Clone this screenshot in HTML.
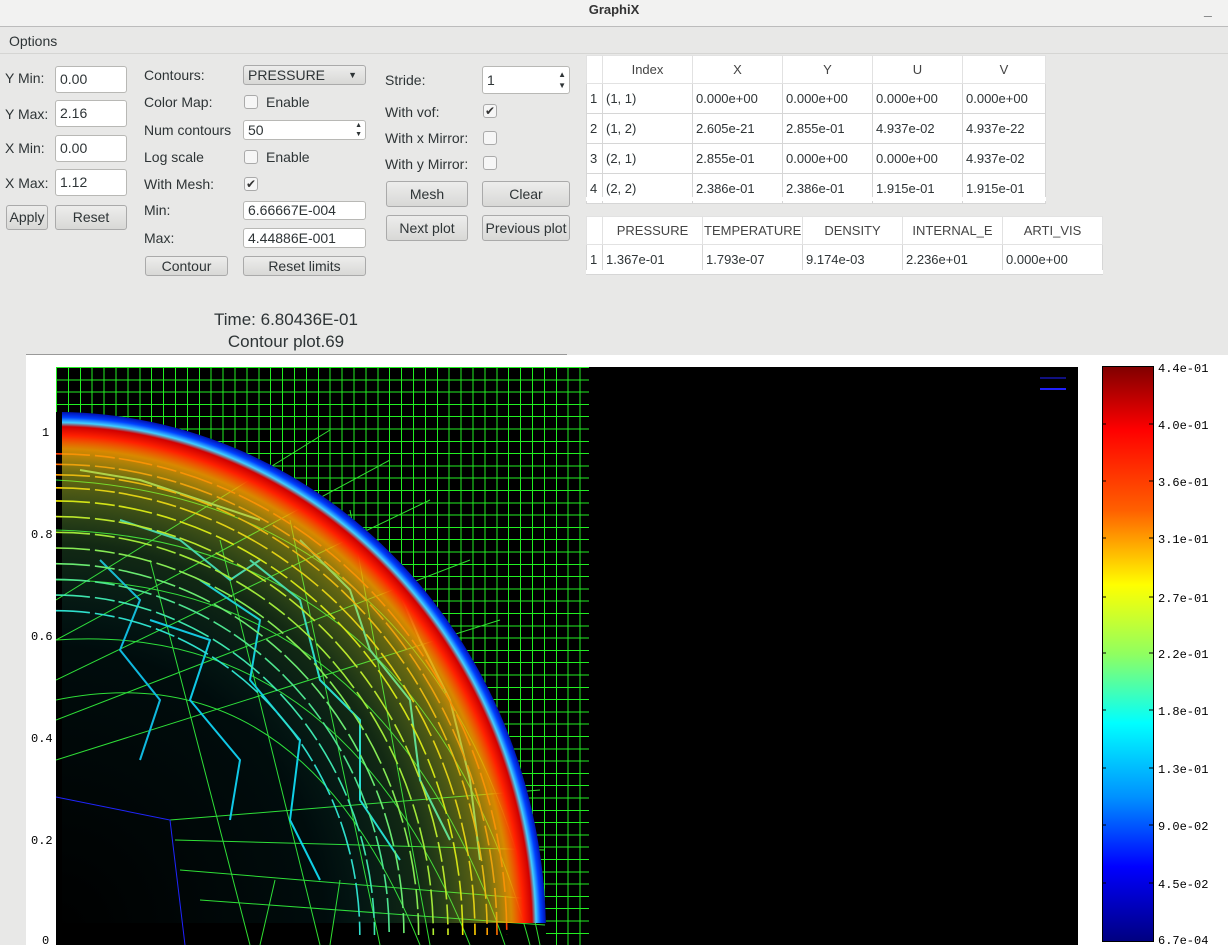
<!DOCTYPE html>
<html><head><meta charset="utf-8"><style>
body{margin:0;width:1228px;height:945px;overflow:hidden;background:#e8e8e7;font-family:"Liberation Sans",sans-serif;font-size:14px;color:#2e3436;position:relative}
.a{position:absolute;white-space:nowrap}
.inp{position:absolute;background:#fff;border:1px solid #b8b8b5;border-radius:3px;box-sizing:border-box;padding-left:4px;font-size:14px;line-height:24px;white-space:nowrap;overflow:hidden}
.btn{position:absolute;background:linear-gradient(#ededec,#d8d8d6);border:1px solid #aaa;border-radius:3px;box-sizing:border-box;text-align:center;font-size:14px;white-space:nowrap;overflow:hidden}
.cb{position:absolute;width:14px;height:14px;border:1px solid #aaa;border-radius:3px;background:#f6f6f6;box-sizing:border-box;font-size:12px;line-height:12px;text-align:center;color:#333}
table{position:absolute;border-collapse:collapse;background:#fff;font-size:13px;table-layout:fixed}
td{border:1px solid #d6d6d6;padding:0 3px;height:29px;white-space:nowrap;overflow:hidden}
th{font-weight:normal;border:1px solid #e2e2e2;height:25px;color:#444;white-space:nowrap;overflow:hidden}
</style></head><body>
<div class="a" style="left:0;top:0;width:1228px;height:26px;background:#f2f2f1;border-bottom:1px solid #bcbcbc"></div>
<div class="a" style="left:0;width:1228px;top:2px;text-align:center;font-weight:bold;font-size:13px;color:#333">GraphiX</div>
<div class="a" style="left:1204px;top:2px;font-weight:bold">_</div>
<div class="a" style="left:9px;top:33px">Options</div>
<div class="a" style="left:0;top:53px;width:1228px;height:1px;background:#d5d5d3"></div>

<div class="a" style="left:5px;top:70px">Y Min:</div><div class="inp" style="left:55px;top:66px;width:72px;height:27px">0.00</div>
<div class="a" style="left:5px;top:106px">Y Max:</div><div class="inp" style="left:55px;top:100px;width:72px;height:27px">2.16</div>
<div class="a" style="left:5px;top:140px">X Min:</div><div class="inp" style="left:55px;top:135px;width:72px;height:27px">0.00</div>
<div class="a" style="left:5px;top:175px">X Max:</div><div class="inp" style="left:55px;top:169px;width:72px;height:27px">1.12</div>
<div class="btn" style="left:6px;top:205px;width:42px;height:25px;line-height:23px">Apply</div>
<div class="btn" style="left:55px;top:205px;width:72px;height:25px;line-height:23px">Reset</div>

<div class="a" style="left:144px;top:67px">Contours:</div>
<div class="btn" style="left:243px;top:65px;width:123px;height:20px;line-height:18px;text-align:left;padding-left:4px">PRESSURE<span style="position:absolute;right:8px;font-size:9px">▼</span></div>
<div class="a" style="left:144px;top:94px">Color Map:</div><div class="cb" style="left:244px;top:95px"></div><div class="a" style="left:266px;top:94px">Enable</div>
<div class="a" style="left:144px;top:122px">Num contours</div><div class="inp" style="left:243px;top:120px;width:123px;height:20px;line-height:18px">50<span style="position:absolute;right:3px;top:0;font-size:7px;line-height:9px">▲<br>▼</span></div>
<div class="a" style="left:144px;top:149px">Log scale</div><div class="cb" style="left:244px;top:150px"></div><div class="a" style="left:266px;top:149px">Enable</div>
<div class="a" style="left:144px;top:176px">With Mesh:</div><div class="cb" style="left:244px;top:177px">✔</div>
<div class="a" style="left:144px;top:202px">Min:</div><div class="inp" style="left:243px;top:201px;width:123px;height:19px;line-height:17px">6.66667E-004</div>
<div class="a" style="left:144px;top:230px">Max:</div><div class="inp" style="left:243px;top:228px;width:123px;height:20px;line-height:18px">4.44886E-001</div>
<div class="btn" style="left:145px;top:256px;width:83px;height:20px;line-height:18px">Contour</div>
<div class="btn" style="left:243px;top:256px;width:123px;height:20px;line-height:18px">Reset limits</div>

<div class="a" style="left:385px;top:72px">Stride:</div><div class="inp" style="left:482px;top:66px;width:88px;height:28px;line-height:26px">1<span style="position:absolute;right:3px;top:2px;font-size:8px;line-height:11px">▲<br>▼</span></div>
<div class="a" style="left:385px;top:104px">With vof:</div><div class="cb" style="left:483px;top:104px">✔</div>
<div class="a" style="left:385px;top:130px">With x Mirror:</div><div class="cb" style="left:483px;top:131px"></div>
<div class="a" style="left:385px;top:156px">With y Mirror:</div><div class="cb" style="left:483px;top:156px"></div>
<div class="btn" style="left:386px;top:181px;width:82px;height:26px;line-height:24px">Mesh</div>
<div class="btn" style="left:482px;top:181px;width:88px;height:26px;line-height:24px">Clear</div>
<div class="btn" style="left:386px;top:215px;width:82px;height:26px;line-height:24px">Next plot</div>
<div class="btn" style="left:482px;top:215px;width:88px;height:26px;line-height:24px">Previous plot</div>

<div class="a" style="left:186px;width:200px;text-align:center;top:310px;font-size:17px">Time: 6.80436E-01</div>
<div class="a" style="left:186px;width:200px;text-align:center;top:332px;font-size:17px">Contour plot.69</div>
<div class="a" style="left:26px;top:354px;width:541px;height:1px;background:#999"></div>

<table style="left:586px;top:55px;width:460px">
<colgroup><col style="width:16px"><col style="width:90px"><col style="width:90px"><col style="width:90px"><col style="width:90px"><col></colgroup>
<tr><th></th><th>Index</th><th>X</th><th>Y</th><th>U</th><th>V</th></tr>
<tr><td>1</td><td>(1, 1)</td><td>0.000e+00</td><td>0.000e+00</td><td>0.000e+00</td><td>0.000e+00</td></tr>
<tr><td>2</td><td>(1, 2)</td><td>2.605e-21</td><td>2.855e-01</td><td>4.937e-02</td><td>4.937e-22</td></tr>
<tr><td>3</td><td>(2, 1)</td><td>2.855e-01</td><td>0.000e+00</td><td>0.000e+00</td><td>4.937e-02</td></tr>
<tr><td>4</td><td>(2, 2)</td><td>2.386e-01</td><td>2.386e-01</td><td>1.915e-01</td><td>1.915e-01</td></tr>
</table>
<div class="a" style="left:586px;top:197px;width:460px;height:4px;background:#fff"></div>
<table style="left:586px;top:216px;width:517px">
<colgroup><col style="width:16px"><col style="width:100px"><col style="width:100px"><col style="width:100px"><col style="width:100px"><col></colgroup>
<tr><th></th><th>PRESSURE</th><th>TEMPERATURE</th><th>DENSITY</th><th>INTERNAL_E</th><th>ARTI_VIS</th></tr>
<tr><td>1</td><td>1.367e-01</td><td>1.793e-07</td><td>9.174e-03</td><td>2.236e+01</td><td>0.000e+00</td></tr>
</table>
<div class="a" style="left:586px;top:270px;width:517px;height:4px;background:#fff"></div>

<div class="a" style="left:26px;top:355px;width:1202px;height:590px;background:#fff"></div>
<div class="a" style="left:56px;top:367px;width:1022px;height:578px;background:#000"></div>
<div class="a" style="left:56px;top:367px;width:533px;height:578px;background:repeating-linear-gradient(90deg,#22ee22 0 1px,transparent 1px 11.9px),repeating-linear-gradient(180deg,#22ee22 0 1px,transparent 1px 12.3px)"></div>

<svg class="a" style="left:0;top:355px" width="1228" height="590" viewBox="0 355 1228 590">
<defs>
<radialGradient id="g" cx=".5" cy=".5" r=".5">
<stop offset="0" stop-color="#00c8d0" stop-opacity="0"/>
<stop offset=".55" stop-color="#00c8d0" stop-opacity=".06"/>
<stop offset=".75" stop-color="#60d060" stop-opacity=".2"/>
<stop offset=".88" stop-color="#d0d020" stop-opacity=".5"/>
<stop offset=".93" stop-color="#ffa000" stop-opacity=".85"/>
<stop offset=".955" stop-color="#ff2000"/>
<stop offset=".972" stop-color="#d00000"/>
<stop offset=".98" stop-color="#40d0ff"/>
<stop offset=".99" stop-color="#0040ff"/>
<stop offset="1" stop-color="#0010b0"/>
</radialGradient>
<linearGradient id="cb" x1="0" y1="0" x2="0" y2="1">
<stop offset="0" stop-color="#800000"/><stop offset=".11" stop-color="#ff0000"/>
<stop offset=".25" stop-color="#ff6000"/><stop offset=".38" stop-color="#ffff00"/>
<stop offset=".5" stop-color="#90ff60"/><stop offset=".62" stop-color="#00ffff"/>
<stop offset=".75" stop-color="#0090ff"/><stop offset=".87" stop-color="#0000ff"/>
<stop offset="1" stop-color="#000080"/>
</linearGradient>
<clipPath id="pc"><rect x="56" y="367" width="1022" height="578"/></clipPath>
<clipPath id="pc2"><rect x="62" y="367" width="1016" height="556"/></clipPath>
</defs>
<g clip-path="url(#pc)">
<ellipse cx="56" cy="935" rx="490" ry="523" fill="#000"/>
<g fill="none" stroke="#30e030" stroke-width="1">
<path d="M56,700 Q300,650 420,945"/><path d="M56,640 Q340,620 470,945"/><path d="M56,580 Q380,580 505,945"/>
<path d="M56,530 Q420,540 530,945"/><path d="M56,480 Q450,500 540,945"/>
<path d="M56,760 L500,620"/><path d="M56,720 L470,560"/><path d="M56,680 L430,500"/><path d="M56,640 L390,460"/><path d="M56,600 L330,430"/>
<path d="M170,820 L540,790"/><path d="M175,840 L545,850"/><path d="M180,870 L545,900"/>
<path d="M150,560 L250,945"/><path d="M220,540 L320,945"/><path d="M290,520 L380,945"/><path d="M350,510 L430,945"/>
<path d="M200,900 L545,925"/><path d="M260,945 L275,880"/><path d="M330,945 L340,880"/>
</g>
<rect x="56" y="800" width="110" height="145" fill="#000"/>
<path d="M56,797 L170,820 L185,945" stroke="#2020ff" fill="none"/>
<g fill="none" stroke-width="2" stroke-linejoin="round">
<path d="M100,560 L140,600 L120,650 L160,700 L140,760" stroke="#10b8e0"/>
<path d="M150,620 L210,640 L190,700 L240,760 L230,820" stroke="#10c8e8"/>
<path d="M200,580 L260,620 L250,680 L300,740 L290,820 L320,880" stroke="#10d0e8"/>
<path d="M250,560 L300,600 L320,680 L360,720 L360,800 L400,860" stroke="#20e0e0"/>
<path d="M300,540 L350,590 L370,650 L410,700 L420,780 L450,840" stroke="#40e8c0"/>
<path d="M330,520 L390,570 L420,640 L450,700 L470,780 L480,860" stroke="#70e090"/>
<path d="M120,520 L180,540 L230,580 L260,560" stroke="#30d8d0"/>
<path d="M80,470 L140,480 L200,500 L260,520" stroke="#80e080"/>
</g>
<g fill="none" stroke-width="1.6" stroke-dasharray="34 5 20 4">
<path d="M56,610.7 A303.8,324.3 0 0 1 359.8,935" stroke="#30e0d0"/>
<path d="M56,595.1 A318.5,340 0 0 1 374.5,935" stroke="#40e8b0"/>
<path d="M56,579.4 A333.2,355.6 0 0 1 389.2,935" stroke="#50e890"/>
<path d="M56,563.7 A347.9,371.3 0 0 1 403.9,935" stroke="#70f070"/>
<path d="M56,548 A362.6,387 0 0 1 418.6,935" stroke="#90f050"/>
<path d="M56,532.3 A377.3,402.7 0 0 1 433.3,935" stroke="#b0f030"/>
<path d="M56,516.6 A392,418.4 0 0 1 448,935" stroke="#d0f020"/>
<path d="M56,500.9 A406.7,434.1 0 0 1 462.7,935" stroke="#f0f000"/>
<path d="M56,487.8 A419,447.2 0 0 1 475,935" stroke="#ffd000"/>
<path d="M56,474.8 A431.2,460.2 0 0 1 487.2,935" stroke="#ffa000"/>
<path d="M56,464.3 A441,470.7 0 0 1 497,935" stroke="#ff7000"/>
<path d="M56,453.8 A450.8,481.2 0 0 1 506.8,935" stroke="#ff4000"/>
</g>
<g clip-path="url(#pc2)"><ellipse cx="56" cy="935" rx="490" ry="523" fill="url(#g)"/></g>
</g>
<line x1="1040" y1="378" x2="1066" y2="378" stroke="#2020ff"/>
<line x1="1040" y1="389" x2="1066" y2="389" stroke="#2020ff" stroke-width="2"/>
<rect x="1102.5" y="366.5" width="51" height="575" fill="url(#cb)" stroke="#000"/>
<path stroke="#000" d="M1102 424h4M1149 424h4M1102 481h4M1149 481h4M1102 538h4M1149 538h4M1102 597h4M1149 597h4M1102 653h4M1149 653h4M1102 710h4M1149 710h4M1102 768h4M1149 768h4M1102 825h4M1149 825h4M1102 883h4M1149 883h4"/>
<g font-family="Liberation Mono, monospace" font-size="12" fill="#000">
<text x="1158" y="372">4.4e-01</text><text x="1158" y="429">4.0e-01</text><text x="1158" y="486">3.6e-01</text>
<text x="1158" y="543">3.1e-01</text><text x="1158" y="602">2.7e-01</text><text x="1158" y="658">2.2e-01</text>
<text x="1158" y="715">1.8e-01</text><text x="1158" y="773">1.3e-01</text><text x="1158" y="830">9.0e-02</text>
<text x="1158" y="888">4.5e-02</text><text x="1158" y="944">6.7e-04</text>
<text x="42" y="436">1</text><text x="31" y="538">0.8</text><text x="31" y="640">0.6</text>
<text x="31" y="742">0.4</text><text x="31" y="844">0.2</text><text x="42" y="944">0</text>
</g>
</svg>
</body></html>
